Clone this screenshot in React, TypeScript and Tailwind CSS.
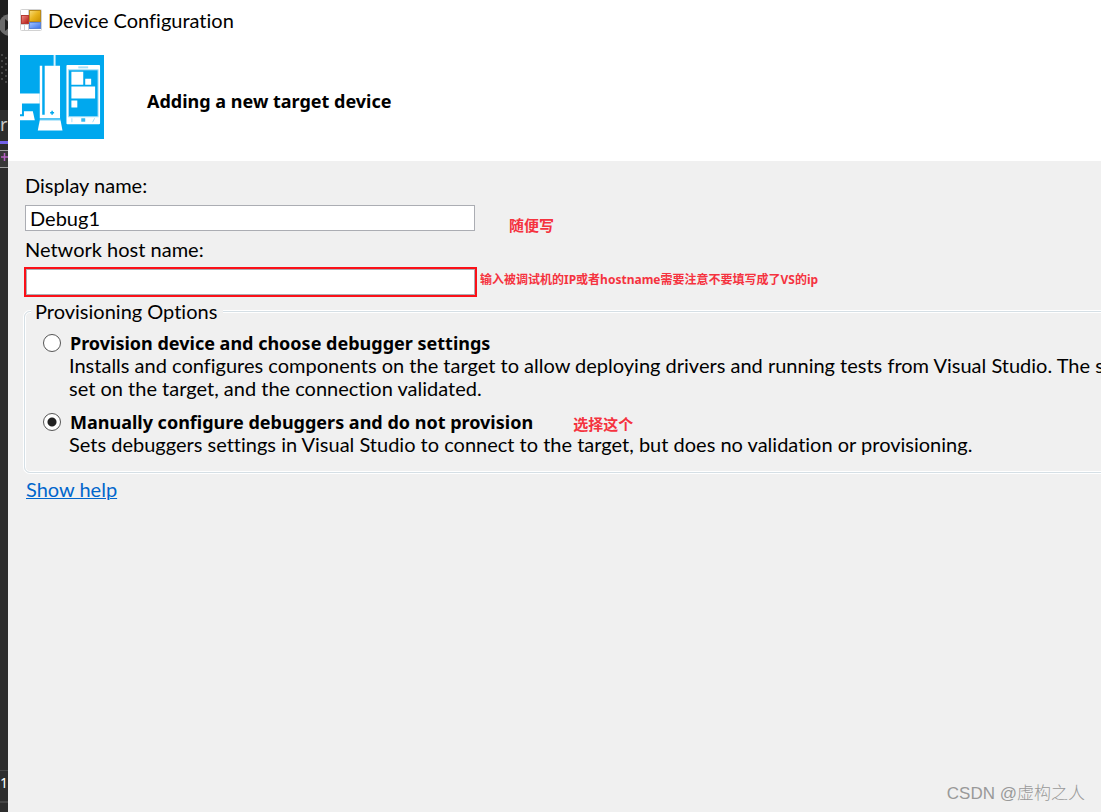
import { useState } from 'react';

const AppIcon = () => (
  <svg width="22" height="22" viewBox="0 0 22 22" aria-hidden="true">
    <defs>
      <linearGradient id="gold" x1="0" y1="0" x2="1" y2="1">
        <stop offset="0" stopColor="#f8dc7c" />
        <stop offset="0.5" stopColor="#e8b31c" />
        <stop offset="1" stopColor="#c98f00" />
      </linearGradient>
      <linearGradient id="red" x1="0" y1="0" x2="1" y2="1">
        <stop offset="0" stopColor="#ef8d84" />
        <stop offset="1" stopColor="#b3150f" />
      </linearGradient>
      <linearGradient id="blue" x1="0" y1="0" x2="1" y2="1">
        <stop offset="0" stopColor="#a4c4ff" />
        <stop offset="1" stopColor="#3a72e8" />
      </linearGradient>
    </defs>
    <rect x="0.5" y="0.5" width="21" height="21" rx="1" fill="#fff" stroke="#d2d2d2" />
    <path d="M4.5 15v6M8.5 0v21M0 15.5h9" stroke="#cfcfcf" />
    <rect x="9.5" y="1.5" width="11" height="11" fill="url(#gold)" stroke="#b98a1a" />
    <rect x="1.5" y="6.5" width="7" height="8" fill="url(#red)" stroke="#b53a33" />
    <rect x="9.5" y="13.5" width="11" height="6" fill="url(#blue)" stroke="#5b84d6" />
  </svg>
);

const DeviceLogo = () => (
  <svg width="84" height="84" viewBox="0 0 85 85" aria-hidden="true">
    <rect width="85" height="85" fill="#00a8ee" />
    {/* monitor and keyboard at the left edge */}
    <path d="M0 39h20v10H2v11H0z" fill="#fff" />
    <path d="M4 57h9l2 9H0v-4h4z" fill="#fff" />
    {/* tower */}
    <path d="M34 0h2v11h-2z" fill="#d9f2fd" />
    <path d="M20 11h2.500v49.500h2.500V11h15.500v53H20z" fill="#fff" />
    <path d="M20 66h21l2 10.500H18z" fill="#fff" />
    <path d="M20 65h21" stroke="#7fd3f6" />
    <path d="M32.500 56.500v4M30.500 58.500h4" stroke="#00a8ee" strokeWidth="1.500" />
    {/* phone */}
    <rect x="47" y="10" width="34" height="60" rx="1" fill="#fff" />
    <rect x="49" y="15" width="30" height="47.500" fill="#00a8ee" stroke="#a6e0f8" />
    <path d="M59 12.500h10" stroke="#a6e0f8" strokeWidth="2" />
    <path d="M52 17h12v13H52zM66 24h6v6h-6zM52 32h24v12H52zM52 46h6v7h-6z" fill="#fff" />
    <rect x="62" y="64" width="4" height="3.500" fill="#35b9f1" />
    <path d="M52.500 64v4M75.500 64l-2 4" stroke="#a6e0f8" />
  </svg>
);

// Sliver of the editor window that shows behind the dialog
const EditorEdge = () => (
  <div className="flex w-2 shrink-0 flex-col justify-between overflow-hidden bg-[#2d2d2d] font-['Noto_Sans',sans-serif] text-lg">
    <div>
      <div className="h-[110px] bg-[#1f1f1f]">
        <svg width="8" height="110" aria-hidden="true">
          <circle cx="10" cy="25" r="11" fill="#6b6b6b" />
          <path d="M5 19l7 6-7 6z" fill="#1f1f1f" />
          <path
            d="M1 55h2M5 58h2M1 61h2M5 64h2M1 67h2M5 70h2M1 73h2M5 76h2M1 79h2M5 82h2"
            stroke="#555"
            strokeWidth="1.500"
          />
        </svg>
      </div>
      <div className="h-[31px] leading-7 text-[#c8c8c8]">r</div>
      <div className="h-[3px] bg-[#7160e8]" />
      <div className="mt-[6px] h-[18px] border-y border-[#a0a0a0] bg-[#383838]">
        <svg width="8" height="14" aria-hidden="true">
          <path d="M4.500 2v8M1 6h7" stroke="#b45fc0" strokeWidth="1.500" />
        </svg>
      </div>
    </div>
    <div className="border-t border-[#454545]">
      <div className="h-6 text-sm leading-6 text-white">1</div>
      <div className="mb-[9px] h-2 border-b-2 border-[#454545]" />
    </div>
  </div>
);

interface OptionProps {
  value: string;
  label: string;
  checked: boolean;
  onChange: (value: string) => void;
  note?: string;
  children: React.ReactNode;
}

const Option = ({ value, label, checked, onChange, note, children }: OptionProps) => (
  <div className="whitespace-nowrap">
    <div className="flex h-[22px] items-center">
      <input
        id={value}
        type="radio"
        name="provisioning"
        checked={checked}
        onChange={() => onChange(value)}
        className="mr-[9px] size-[18px] shrink-0 appearance-none rounded-full border border-[#555] bg-white checked:bg-[radial-gradient(circle,#222_4px,#fff_5px)]"
      />
      <label htmlFor={value} className="font-['Noto_Sans',sans-serif] text-[18px] font-bold">
        {label}
      </label>
      {note && <Note className="ml-10 pt-1 text-[15px]">{note}</Note>}
    </div>
    <p className="pl-[26px] leading-[23px]">{children}</p>
  </div>
);

const Note = ({ className, children }: { className: string; children: React.ReactNode }) => (
  <span className={`font-['Noto_Sans','Noto_Sans_CJK_SC',sans-serif] font-bold whitespace-nowrap text-[#f5333f] ${className}`}>
    {children}
  </span>
);

const App = () => {
  const [displayName, setDisplayName] = useState('Debug1');
  const [hostName, setHostName] = useState('');
  const [mode, setMode] = useState('manual');

  return (
    <div className="flex min-h-screen font-['Lato',sans-serif] text-[20px] leading-6 text-black [font-variant-ligatures:none]">
      <EditorEdge />

      <div className="relative flex min-w-0 flex-1 flex-col overflow-hidden bg-[#f0f0f0]">
        <header className="bg-white pb-[22px]">
          <div className="flex h-10 items-center gap-[6px] pl-3">
            <AppIcon />
            <span>Device Configuration</span>
          </div>
          <div className="mt-[15px] flex items-center gap-[43px] pl-3">
            <DeviceLogo />
            <h1 className="pt-2 font-['Noto_Sans',sans-serif] text-[18px] font-bold">Adding a new target device</h1>
          </div>
        </header>

        <main className="px-4 pt-3">
          <label htmlFor="display-name" className="block pl-px">
            Display name:
          </label>
          <div className="mt-2 flex h-[26px] gap-[34px] pl-px">
            <input
              id="display-name"
              value={displayName}
              onChange={(e) => setDisplayName(e.target.value)}
              className="h-[26px] w-[450px] border border-[#abadb3] bg-white px-1 outline-none"
            />
            <Note className="pt-3 text-[15px] leading-4">随便写</Note>
          </div>

          <label htmlFor="host-name" className="mt-[6px] block pl-px">
            Network host name:
          </label>
          <div className="mt-[6px] flex items-center gap-[3px]">
            <div className="border-2 border-[#fb1018]">
              <input
                id="host-name"
                value={hostName}
                onChange={(e) => setHostName(e.target.value)}
                className="block h-[26px] w-[449px] border border-[#abadb3] bg-white px-1 outline-none"
              />
            </div>
            <Note className="pb-1 text-[12px] leading-4">输入被调试机的IP或者hostname需要注意不要填写成了VS的ip</Note>
          </div>

          <fieldset className="mt-[2px] -mr-8 rounded-md border border-[#d5dfe5] pl-[18px] shadow-[0_0_0_1px_#fff,inset_0_0_0_1px_#fff]">
            <legend className="-ml-3 bg-[#f0f0f0] pr-1.5 pl-1">Provisioning Options</legend>
            <div className="flex flex-col gap-[11px] pt-[9px] pb-4">
              <Option
                value="provision"
                label="Provision device and choose debugger settings"
                checked={mode === 'provision'}
                onChange={setMode}
              >
                Installs and configures components on the target to allow deploying drivers and running tests from Visual Studio. The sp
                <br />
                set on the target, and the connection validated.
              </Option>
              <Option
                value="manual"
                label="Manually configure debuggers and do not provision"
                checked={mode === 'manual'}
                onChange={setMode}
                note="选择这个"
              >
                Sets debuggers settings in Visual Studio to connect to the target, but does no validation or provisioning.
              </Option>
            </div>
          </fieldset>

          <a href="#help" className="mt-1 ml-[2px] inline-block text-[#0066cc] underline decoration-1">
            Show help
          </a>
        </main>

        <div className="absolute right-4 bottom-1.5 font-['Liberation_Sans','Noto_Sans_CJK_SC',sans-serif] text-[17px] font-light text-[#999]">
          CSDN @虚构之人
        </div>
      </div>
    </div>
  );
};

export default App;
